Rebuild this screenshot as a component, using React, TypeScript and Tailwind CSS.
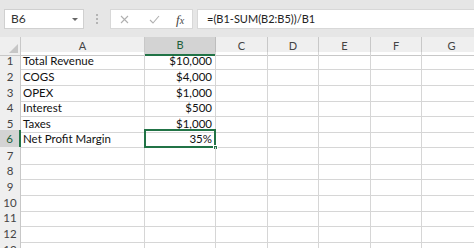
import React from "react";

// column widths in px: row header, A..G
const columns = ["A", "B", "C", "D", "E", "F", "G"];

const rows: { label: string; value: string }[] = [
  { label: "Total Revenue", value: "$10,000" },
  { label: "COGS", value: "$4,000" },
  { label: "OPEX", value: "$1,000" },
  { label: "Interest", value: "$500" },
  { label: "Taxes", value: "$1,000" },
  { label: "Net Profit Margin", value: "35%" },
  { label: "", value: "" },
  { label: "", value: "" },
  { label: "", value: "" },
  { label: "", value: "" },
  { label: "", value: "" },
  { label: "", value: "" },
  { label: "", value: "" },
];

// row heights alternate a bit, like the screenshot
const rowHeights = [
  "h-[16px]", "h-[16px]", "h-[15px]", "h-[16px]", "h-[15px]", "h-[17px]",
  "h-[15px]", "h-[16px]", "h-[16px]", "h-[15px]", "h-[16px]", "h-[16px]", "h-[16px]",
];

const gridCols = "grid grid-cols-[21px_124px_71px_52px_51px_52px_51px_60px]";

const FormulaBar: React.FC = () => (
  <div className="h-[37px] bg-[#e6e6e6] flex items-start pt-[9px] pl-[4px]">
    {/* name box */}
    <div className="w-[80px] h-[20px] bg-white border border-[#d0d0d0] flex items-center justify-between pl-[6px] pr-[5px] text-[12px] text-[#333]">
      <span>B6</span>
      <svg width="6" height="3" viewBox="0 0 6 3">
        <path d="M0 0 L6 0 L3 3 Z" fill="#666" />
      </svg>
    </div>
    {/* grip dots */}
    <div className="w-[26px] h-[20px] flex flex-col items-center justify-center gap-[2px]">
      <span className="w-[2px] h-[2px] bg-[#b4b4b4]" />
      <span className="w-[2px] h-[2px] bg-[#b4b4b4]" />
      <span className="w-[2px] h-[2px] bg-[#b4b4b4]" />
    </div>
    {/* cancel / enter / fx */}
    <div className="w-[83px] h-[20px] bg-white border border-[#d8d8d8] flex items-center pl-[9px]">
      <svg width="9" height="9" viewBox="0 0 9 9">
        <path d="M1 1 L8 8 M8 1 L1 8" stroke="#b0b0b0" strokeWidth="1.1" />
      </svg>
      <svg width="11" height="9" viewBox="0 0 11 9" className="ml-[20px]">
        <path d="M1 5 L4 8 L10 1" stroke="#b0b0b0" strokeWidth="1.1" fill="none" />
      </svg>
      <span className="ml-[16px] text-[13px] italic text-[#444] font-['Liberation_Serif',serif] leading-none">
        f<span className="text-[10px]">x</span>
      </span>
    </div>
    {/* formula */}
    <div className="ml-[4px] flex-1 h-[20px] bg-white border border-[#d8d8d8] border-r-0 flex items-center pl-[9px] text-[11px] text-[#222]">
      =(B1-SUM(B2:B5))/B1
    </div>
  </div>
);

const HeaderRow: React.FC = () => (
  <div className={`${gridCols} h-[15px] bg-[#efefef]`}>
    <div className="border-r border-b border-[#c8c8c8] relative">
      <svg width="9" height="9" viewBox="0 0 9 9" className="absolute right-[2px] bottom-[2px]">
        <path d="M9 0 L9 9 L0 9 Z" fill="#c6c6c6" />
      </svg>
    </div>
    {columns.map((c) =>
      c === "B" ? (
        <div
          key={c}
          className="bg-[#d3d3d3] border-r border-[#bdbdbd] border-b-2 border-b-[#217346] flex items-center justify-center text-[11px] text-[#1e5e3a]"
        >
          {c}
        </div>
      ) : (
        <div
          key={c}
          className="border-r border-b border-[#c8c8c8] flex items-center justify-center text-[11px] text-[#444]"
        >
          {c}
        </div>
      )
    )}
  </div>
);

export default function App() {
  return (
    <div className="w-[474px] h-[248px] overflow-hidden bg-white font-['Lato','Liberation_Sans',sans-serif]">
      <FormulaBar />
      <HeaderRow />
      {rows.map((r, i) => {
        const selected = i === 5;
        return (
          <div key={i} className={`${gridCols} ${rowHeights[i]}`}>
            <div
              className={
                selected
                  ? "bg-[#d3d3d3] border-r-2 border-r-[#217346] border-b border-b-[#c8c8c8] flex items-center justify-center text-[11.5px] text-[#1e5e3a]"
                  : "bg-[#efefef] border-r border-b border-[#c8c8c8] flex items-center justify-center text-[11.5px] text-[#444]"
              }
            >
              {i + 1}
            </div>
            <div className="border-r border-b border-[#d6d6d6] flex items-center pl-[2px] text-[11.5px] text-[#111] whitespace-nowrap">
              {r.label}
            </div>
            <div className="border-r border-b border-[#d6d6d6] flex items-center justify-end pr-[3px] text-[11.5px] text-[#111] relative">
              {selected && (
                <>
                  <div className="absolute -left-[1px] -top-[1px] right-[-1px] bottom-[-1px] border-2 border-[#217346]" />
                  <div className="absolute right-[-3px] bottom-[-3px] w-[5px] h-[5px] bg-[#217346] border border-white" />
                </>
              )}
              <span className="relative">{r.value}</span>
            </div>
            {[0, 1, 2, 3, 4].map((k) => (
              <div key={k} className="border-r border-b border-[#d6d6d6]" />
            ))}
          </div>
        );
      })}
    </div>
  );
}
